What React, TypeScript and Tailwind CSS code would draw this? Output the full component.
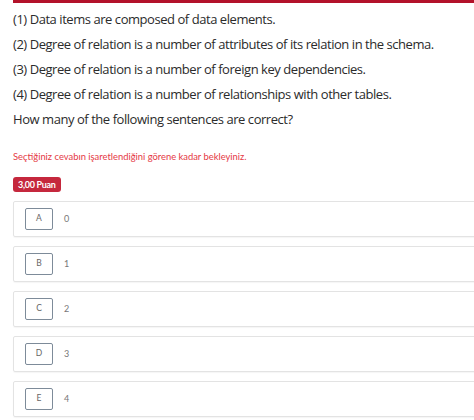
const lines = [
  "(1) Data items are composed of data elements.",
  "(2) Degree of relation is a number of attributes of its relation in the schema.",
  "(3) Degree of relation is a number of foreign key dependencies.",
  "(4) Degree of relation is a number of relationships with other tables.",
  "How many of the following sentences are correct?",
];

const options = [
  { key: "A", value: "0" },
  { key: "B", value: "1" },
  { key: "C", value: "2" },
  { key: "D", value: "3" },
  { key: "E", value: "4" },
];

export default function App() {
  return (
    <div className="h-[420px] w-[474px] overflow-hidden bg-white font-['Open_Sans',sans-serif]">
      <div className="ml-[13px] h-[3px] bg-[#b3122a]" />
      <div className="pl-[13px]">
        <div className="mt-[7px] flex flex-col gap-[7px] whitespace-nowrap text-[13px] leading-[18px] tracking-[-0.45px] text-[#2b2b2b]">
          {lines.map((l) => (
            <p key={l}>{l}</p>
          ))}
        </div>
        <p className="mt-[23px] font-['Lato',sans-serif] text-[9.4px] leading-[12px] text-[#e53945]">
          Seçtiğiniz cevabın işaretlendiğini görene kadar bekleyiniz.
        </p>
        <div className="mt-[14px] inline-flex h-[15px] items-center rounded-[3px] bg-[#c5283d] px-[5px] font-['Lato',sans-serif] text-[9px] font-bold tracking-[-0.3px] text-white">
          3,00 Puan
        </div>
        <div className="mt-[7px] flex w-[520px] flex-col gap-[9px]">
          {options.map((o) => (
            <div
              key={o.key}
              className="flex h-[36px] items-center gap-[11px] rounded-[2px] border border-[#e3e3e3] pl-[11px] shadow-[0_1px_1px_rgba(0,0,0,0.04)]"
            >
              <div className="flex h-[22px] w-[28px] items-center justify-center rounded-[2px] border border-[#7d8b99] font-['Lato',sans-serif] text-[8.5px] text-[#666]">
                {o.key}
              </div>
              <span className="font-['Lato',sans-serif] text-[9px] text-[#777]">{o.value}</span>
            </div>
          ))}
        </div>
      </div>
    </div>
  );
}
